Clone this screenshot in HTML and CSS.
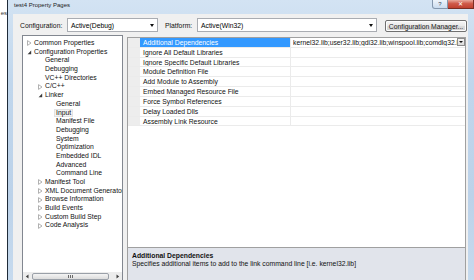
FILE: index.html
```html
<!DOCTYPE html>
<html>
<head>
<meta charset="utf-8">
<link rel="stylesheet" href="styles.css">
</head>
<body>
<div class="behind"><span>es</span></div>
<div class="window">
  <div class="titlebar">
    <span class="title">test4 Property Pages</span>
    <div class="caption-btns">
      <div class="cbtn help">?</div>
      <div class="cbtn close">✕</div>
    </div>
  </div>
  <div class="frame">
    <div class="content">
      <div class="toolbar">
        <span class="lbl lbl1">Configuration:</span>
        <div class="combo combo1"><span>Active(Debug)</span><i class="caret"></i></div>
        <span class="lbl lbl2">Platform:</span>
        <div class="combo combo2"><span>Active(Win32)</span><i class="caret"></i></div>
        <div class="button">Configuration Manager...</div>
      </div>
      <div class="main">
        <div class="tree">
          <div class="items">
            <div class="trow l0"><span class="tw"><svg width="5" height="6" viewBox="0 0 5 6"><path d="M0.5 0.6 L4 3 L0.5 5.4 Z" fill="none" stroke="#a8a8a8" stroke-width="0.9"/></svg></span>Common Properties</div>
            <div class="trow l0"><span class="tw"><svg width="5" height="5" viewBox="0 0 5 5"><path d="M4.2 0.6 L4.2 4.2 L0.6 4.2 Z" fill="#3a3a3a"/></svg></span>Configuration Properties</div>
            <div class="trow l1"><span class="tw"></span>General</div>
            <div class="trow l1"><span class="tw"></span>Debugging</div>
            <div class="trow l1"><span class="tw"></span>VC++ Directories</div>
            <div class="trow l1"><span class="tw"><svg width="5" height="6" viewBox="0 0 5 6"><path d="M0.5 0.6 L4 3 L0.5 5.4 Z" fill="none" stroke="#a8a8a8" stroke-width="0.9"/></svg></span>C/C++</div>
            <div class="trow l1"><span class="tw"><svg width="5" height="5" viewBox="0 0 5 5"><path d="M4.2 0.6 L4.2 4.2 L0.6 4.2 Z" fill="#3a3a3a"/></svg></span>Linker</div>
            <div class="trow l2"><span class="tw"></span>General</div>
            <div class="trow l2"><span class="tw"></span><span class="tsel">Input</span></div>
            <div class="trow l2"><span class="tw"></span>Manifest File</div>
            <div class="trow l2"><span class="tw"></span>Debugging</div>
            <div class="trow l2"><span class="tw"></span>System</div>
            <div class="trow l2"><span class="tw"></span>Optimization</div>
            <div class="trow l2"><span class="tw"></span>Embedded IDL</div>
            <div class="trow l2"><span class="tw"></span>Advanced</div>
            <div class="trow l2"><span class="tw"></span>Command Line</div>
            <div class="trow l1"><span class="tw"><svg width="5" height="6" viewBox="0 0 5 6"><path d="M0.5 0.6 L4 3 L0.5 5.4 Z" fill="none" stroke="#a8a8a8" stroke-width="0.9"/></svg></span>Manifest Tool</div>
            <div class="trow l1"><span class="tw"><svg width="5" height="6" viewBox="0 0 5 6"><path d="M0.5 0.6 L4 3 L0.5 5.4 Z" fill="none" stroke="#a8a8a8" stroke-width="0.9"/></svg></span>XML Document Generator</div>
            <div class="trow l1"><span class="tw"><svg width="5" height="6" viewBox="0 0 5 6"><path d="M0.5 0.6 L4 3 L0.5 5.4 Z" fill="none" stroke="#a8a8a8" stroke-width="0.9"/></svg></span>Browse Information</div>
            <div class="trow l1"><span class="tw"><svg width="5" height="6" viewBox="0 0 5 6"><path d="M0.5 0.6 L4 3 L0.5 5.4 Z" fill="none" stroke="#a8a8a8" stroke-width="0.9"/></svg></span>Build Events</div>
            <div class="trow l1"><span class="tw"><svg width="5" height="6" viewBox="0 0 5 6"><path d="M0.5 0.6 L4 3 L0.5 5.4 Z" fill="none" stroke="#a8a8a8" stroke-width="0.9"/></svg></span>Custom Build Step</div>
            <div class="trow l1"><span class="tw"><svg width="5" height="6" viewBox="0 0 5 6"><path d="M0.5 0.6 L4 3 L0.5 5.4 Z" fill="none" stroke="#a8a8a8" stroke-width="0.9"/></svg></span>Code Analysis</div>
          </div>
          <div class="hscroll">
            <div class="sbtn"><svg width="4" height="5" viewBox="0 0 4 5"><path d="M3.5 0.5 L0.8 2.5 L3.5 4.5 Z" fill="#404040"/></svg></div>
            <div class="thumb"><span class="grip"></span></div>
            <div class="sbtn"><svg width="4" height="5" viewBox="0 0 4 5"><path d="M0.5 0.5 L3.2 2.5 L0.5 4.5 Z" fill="#404040"/></svg></div>
          </div>
        </div>
        <div class="props">
          <div class="grid">
            <div class="prow sel"><div class="gut"></div><div class="name">Additional Dependencies</div><div class="val"><span class="vtext">kernel32.lib;user32.lib;gdi32.lib;winspool.lib;comdlg32.lib</span><span class="dd"><i class="caret small"></i></span></div></div>
            <div class="prow"><div class="gut"></div><div class="name">Ignore All Default Libraries</div><div class="val"></div></div>
            <div class="prow"><div class="gut"></div><div class="name">Ignore Specific Default Libraries</div><div class="val"></div></div>
            <div class="prow"><div class="gut"></div><div class="name">Module Definition File</div><div class="val"></div></div>
            <div class="prow"><div class="gut"></div><div class="name">Add Module to Assembly</div><div class="val"></div></div>
            <div class="prow"><div class="gut"></div><div class="name">Embed Managed Resource File</div><div class="val"></div></div>
            <div class="prow"><div class="gut"></div><div class="name">Force Symbol References</div><div class="val"></div></div>
            <div class="prow"><div class="gut"></div><div class="name">Delay Loaded Dlls</div><div class="val"></div></div>
            <div class="prow"><div class="gut"></div><div class="name">Assembly Link Resource</div><div class="val"></div></div>
          </div>
          <div class="desc">
            <div class="dtitle">Additional Dependencies</div>
            <div class="dtext">Specifies additional items to add to the link command line [i.e. kernel32.lib]</div>
          </div>
        </div>
      </div>
    </div>
  </div>
</div>
</body>
</html>
```
FILE: styles.css
```css
* { box-sizing: border-box; }
html, body { margin: 0; height: 280px; overflow: hidden; }
body {
  display: flex;
  width: 474px;
  font-family: "Liberation Sans", Arial, sans-serif;
  font-size: 6.8px;
  color: #000;
  background: #fff;
}
.behind {
  width: 8px;
  flex: none;
  background: #fff;
  border-right: 1px solid #1f2b38;
  overflow: hidden;
  display: flex;
  justify-content: flex-end;
  padding-top: 9px;
  font-size: 6px;
  color: #333;
}
.behind span { white-space: nowrap; line-height: 8px; height: 8px; }
.window {
  flex: 1;
  min-width: 0;
  display: flex;
  flex-direction: column;
  background: linear-gradient(180deg, #d3e3f3 0%, #c0d6ec 30%, #bcd2e9 70%, #c6daee 100%);
}
.titlebar {
  height: 14px;
  flex: none;
  display: flex;
  align-items: flex-start;
  padding-left: 6px;
}
.title { font-size: 6px; line-height: 11px; color: #1b1b1b; }
.caption-btns { margin-left: auto; display: flex; }
.cbtn {
  height: 9px;
  display: flex;
  align-items: center;
  justify-content: center;
  font-size: 6px;
  line-height: 9px;
}
.help {
  width: 16px;
  background: linear-gradient(180deg, #eef4fa, #cbdcee);
  border: 1px solid #8497ad;
  border-top: none;
  border-radius: 0 0 0 3px;
  color: #3a4a5e;
}
.close {
  width: 26px;
  background: linear-gradient(180deg, #e8a89c 0%, #cf5a4a 45%, #c0402f 100%);
  border: 1px solid #7a2d24;
  border-top: none;
  border-left: none;
  color: #fff;
}
.frame {
  flex: 1;
  min-height: 0;
  display: flex;
  padding: 0 6px 0 5px;
}
.content {
  flex: 1;
  min-width: 0;
  background: #f0f0f0;
  display: flex;
  flex-direction: column;
  padding: 4px 1px 0 7px;
}
.toolbar {
  height: 14px;
  flex: none;
  display: flex;
  align-items: center;
}
.lbl { white-space: nowrap; color: #111; }
.lbl1 { width: 47px; }
.lbl2 { width: 39px; padding-left: 7px; }
.combo {
  height: 14px;
  background: #fff;
  border: 1px solid #a9acb2;
  display: flex;
  align-items: center;
  padding-left: 3px;
  padding-right: 3px;
}
.combo span { flex: 1; white-space: nowrap; }
.combo1 { width: 91px; }
.combo2 { width: 180px; }
.caret {
  width: 0;
  height: 0;
  border-left: 2.5px solid transparent;
  border-right: 2.5px solid transparent;
  border-top: 3px solid #111;
}
.caret.small {
  border-left-width: 2px;
  border-right-width: 2px;
  border-top-width: 2.5px;
}
.button {
  margin-left: 8px;
  width: 82px;
  height: 12px;
  margin-top: 2px;
  border: 1px solid #707070;
  border-radius: 2px;
  background: linear-gradient(180deg, #f5f5f5 0%, #e9e9e9 50%, #dcdcdc 51%, #d0d0d0 100%);
  display: flex;
  align-items: center;
  justify-content: center;
  white-space: nowrap;
  color: #1a1a1a;
  box-shadow: inset 0 0 0 1px #fcfcfc;
}
.main {
  flex: 1;
  min-height: 0;
  display: flex;
  gap: 4px;
  margin-top: 3px;
  margin-bottom: -3px;
  padding-left: 2px;
}
.tree {
  width: 101px;
  flex: none;
  background: #fff;
  border: 1px solid #828790;
  display: flex;
  flex-direction: column;
  overflow: hidden;
}
.items { padding-top: 3px; }
.trow {
  height: 8.7px;
  line-height: 8.7px;
  display: flex;
  align-items: center;
  white-space: nowrap;
  color: #111;
}
.l0 { padding-left: 4px; }
.l1 { padding-left: 15px; }
.l2 { padding-left: 26px; }
.tw {
  width: 7px;
  flex: none;
  display: flex;
  align-items: center;
}
.tw svg { display: block; }
.tsel {
  background: #f3f3f3;
  border: 1px solid #e2e2e2;
  padding: 0 1px;
  margin-left: -2px;
  line-height: 6.7px;
}
.hscroll {
  margin-top: auto;
  margin-bottom: 1px;
  height: 9px;
  flex: none;
  display: flex;
  align-items: stretch;
  background: #ececec;
}
.sbtn {
  width: 8px;
  display: flex;
  align-items: center;
  justify-content: center;
}
.thumb {
  flex: 1;
  margin: 1px 5px 1px 1px;
  border: 1px solid #9aa0a8;
  border-radius: 2px;
  background: linear-gradient(180deg, #f4f4f4, #dcdcdc);
  display: flex;
  align-items: center;
  justify-content: center;
}
.grip {
  width: 5px;
  height: 3px;
  background: repeating-linear-gradient(90deg, #6a6a6a 0 1px, transparent 1px 2px);
}
.props {
  flex: 1;
  min-width: 0;
  margin-top: 2px;
  margin-right: 1px;
  border: 1px solid #a0a0a0;
  display: flex;
  flex-direction: column;
  background: #fff;
}
.grid { flex: 1; min-height: 0; }
.prow {
  height: 9.83px;
  display: flex;
  border-bottom: 1px solid #ebebeb;
}
.gut { width: 12px; flex: none; background: #ededed; }
.name {
  width: 151px;
  flex: none;
  padding-left: 3px;
  border-right: 1px solid #ebebeb;
  white-space: nowrap;
  overflow: hidden;
  display: flex;
  align-items: center;
  color: #111;
}
.sel .name { background: #3399ff; color: #fff; }
.val {
  flex: 1;
  min-width: 0;
  display: flex;
  align-items: center;
  padding-left: 2px;
}
.vtext { flex: 1; min-width: 0; overflow: hidden; white-space: nowrap; color: #111; }
.dd {
  width: 8px;
  height: 8px;
  flex: none;
  border: 1px solid #8c8c8c;
  background: linear-gradient(180deg, #f4f4f4, #dadada);
  display: flex;
  align-items: center;
  justify-content: center;
}
.desc {
  height: 35px;
  flex: none;
  border-top: 1px solid #a0a0a0;
  background: #e1e4eb;
  padding: 4px 4px 0 4px;
  line-height: 8px;
  color: #111;
}
.dtitle { font-weight: bold; }
```
